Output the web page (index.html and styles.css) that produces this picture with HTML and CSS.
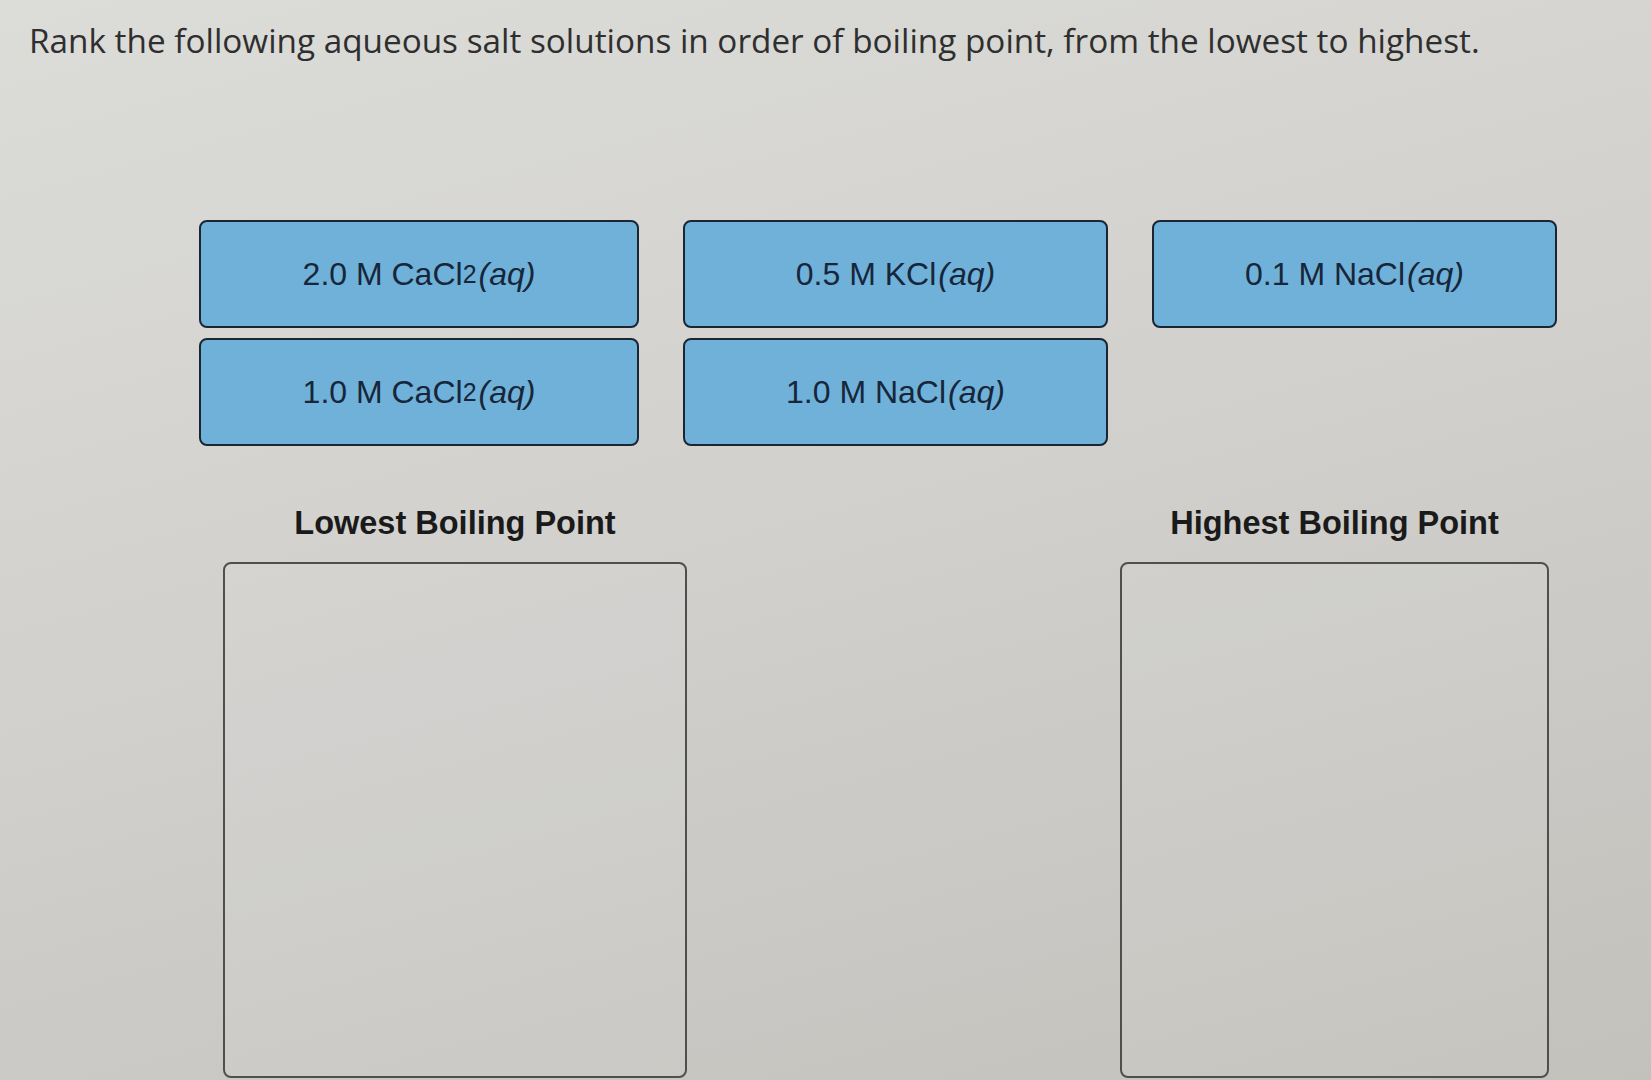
FILE: index.html
```html
<!DOCTYPE html>
<html>

<head>
    <link rel="stylesheet" href="styles.css">
</head>

<body>
    <p class="prompt">Rank the following aqueous salt solutions in order of boiling point, from the lowest to highest.</p>

    <div class="choices">
        <div class="chip">2.0 M CaCl<span class="sub">2</span><i>(aq)</i></div>
        <div class="chip">0.5 M KCl<i>(aq)</i></div>
        <div class="chip">0.1 M NaCl<i>(aq)</i></div>
        <div class="chip">1.0 M CaCl<span class="sub">2</span><i>(aq)</i></div>
        <div class="chip">1.0 M NaCl<i>(aq)</i></div>
    </div>

    <div class="ranking">
        <div class="rank-col">
            <h3>Lowest Boiling Point</h3>
            <div class="dropzone"></div>
        </div>
        <div class="rank-col">
            <h3>Highest Boiling Point</h3>
            <div class="dropzone"></div>
        </div>
    </div>
</body>

</html>
```

FILE: styles.css
```css
html,
body {
    height: 100%;
}

body {
    margin: 0;
    overflow: hidden;
    font-family: "Open Sans", Arial, sans-serif;
    background: linear-gradient(165deg, #dcdcd9 0%, #d2d1ce 45%, #c3c1bc 100%);
}

.prompt {
    margin: 0;
    padding: 17px 0 0 29px;
    font-size: 33.3px;
    font-weight: 400;
    color: #2f2f2f;
}

.choices {
    display: grid;
    grid-template-columns: 440px 425px 405px;
    column-gap: 44px;
    row-gap: 10px;
    margin: 157px 0 0 199px;
}

.chip {
    box-sizing: border-box;
    height: 108px;
    display: flex;
    align-items: center;
    justify-content: center;
    background-color: #6fb1d8;
    border: 2px solid #1c2632;
    border-radius: 8px;
    font-family: "Liberation Sans", Arial, sans-serif;
    font-size: 32px;
    color: #17263a;
}

.chip i {
    margin-left: 2px;
}

.sub {
    font-size: 0.78em;
    vertical-align: -0.1em;
}

.ranking {
    display: grid;
    grid-template-columns: 464px 429px;
    column-gap: 433px;
    margin: 59px 0 0 223px;
}

.rank-col h3 {
    margin: 0 0 20px;
    text-align: center;
    font-family: "Liberation Sans", Arial, sans-serif;
    font-size: 32.5px;
    font-weight: bold;
    color: #1a1a1a;
}

.dropzone {
    box-sizing: border-box;
    height: 516px;
    border: 2px solid #4f4f4c;
    border-radius: 8px;
    background-color: rgba(255, 255, 255, 0.06);
}
```
